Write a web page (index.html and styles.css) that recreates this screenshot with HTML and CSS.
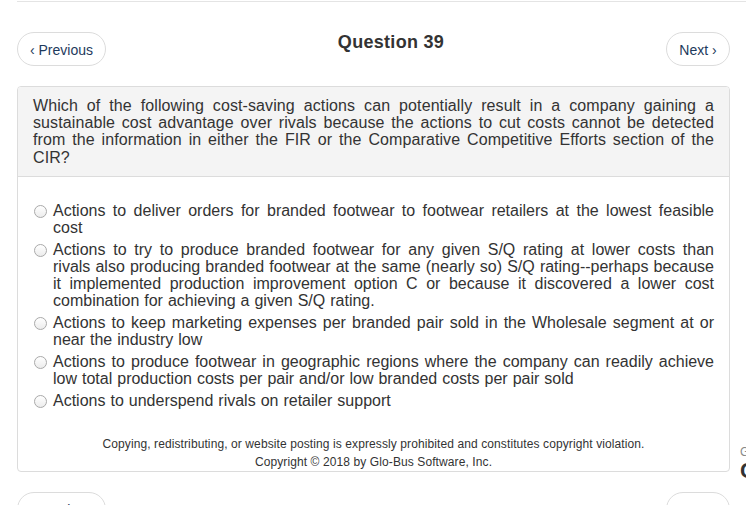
FILE: index.html
```html
<!DOCTYPE html>
<html>
<head>
<meta charset="utf-8">
<link rel="stylesheet" href="styles.css">
</head>
<body>
<div class="page">
  <div class="main">
    <div class="topline"></div>
    <div class="nav">
      <button class="btn btn-prev">&lsaquo; Previous</button>
      <h1 class="title">Question 39</h1>
      <button class="btn btn-next">Next &rsaquo;</button>
    </div>
    <div class="panel">
      <div class="panel-head">Which of the following cost-saving actions can potentially result in a company gaining a sustainable cost advantage over rivals because the actions to cut costs cannot be detected from the information in either the FIR or the Comparative Competitive Efforts section of the CIR?</div>
      <div class="panel-body">
        <ul class="options">
          <li class="option"><span class="radio"></span><span class="opt-text">Actions to deliver orders for branded footwear to footwear retailers at the lowest feasible cost</span></li>
          <li class="option"><span class="radio"></span><span class="opt-text">Actions to try to produce branded footwear for any given S/Q rating at lower costs than rivals also producing branded footwear at the same (nearly so) S/Q rating--perhaps because it implemented production improvement option C or because it discovered a lower cost combination for achieving a given S/Q rating.</span></li>
          <li class="option"><span class="radio"></span><span class="opt-text">Actions to keep marketing expenses per branded pair sold in the Wholesale segment at or near the industry low</span></li>
          <li class="option"><span class="radio"></span><span class="opt-text">Actions to produce footwear in geographic regions where the company can readily achieve low total production costs per pair and/or low branded costs per pair sold</span></li>
          <li class="option"><span class="radio"></span><span class="opt-text">Actions to underspend rivals on retailer support</span></li>
        </ul>
        <div class="copyright">
          <p>Copying, redistributing, or website posting is expressly prohibited and constitutes copyright violation.</p>
          <p>Copyright &copy; 2018 by Glo-Bus Software, Inc.</p>
        </div>
      </div>
    </div>
    <div class="nav nav-bottom">
      <button class="btn btn-prev">&lsaquo; Previous</button>
      <button class="btn btn-next">Next &rsaquo;</button>
    </div>
  </div>
  <div class="side">
    <div class="side-label">Glo-Bus</div>
    <div class="side-value">Corporate</div>
  </div>
</div>
</body>
</html>
```
FILE: styles.css
```css
html, body {
  margin: 0;
  padding: 0;
  background: #fff;
  overflow: hidden;
  width: 746px;
  height: 505px;
}
body {
  font-family: "Liberation Sans", Arial, Helvetica, sans-serif;
  color: #333;
}
.page {
  display: flex;
  padding-left: 17px;
}
.main {
  width: 713px;
  flex: none;
}
.topline {
  height: 0;
  border-top: 1px solid #e4e4e4;
  margin-top: 1px;
  margin-right: -40px;
}
.nav {
  display: flex;
  justify-content: space-between;
  align-items: flex-start;
  margin-top: 30px;
}
.btn {
  height: 34px;
  border: 1px solid #dcdcdc;
  border-radius: 17px;
  background: #fff;
  font-family: "Liberation Sans", Arial, sans-serif;
  font-size: 14px;
  color: #1e3a5c;
  padding: 2px 0 0 0;
  margin: 0;
  cursor: pointer;
}
.btn-prev { width: 89px; }
.btn-next { width: 64px; }
.title {
  margin: 0;
  font-size: 18px;
  line-height: 20px;
  letter-spacing: 0.3px;
  font-weight: bold;
  color: #333;
  padding-left: 10px;
}
.panel {
  margin-top: 20px;
  border: 1px solid #dcdcdc;
  border-radius: 4px;
  overflow: hidden;
}
.panel-head {
  background: #f4f4f4;
  border-bottom: 1px solid #dcdcdc;
  padding: 10px 15px 10px 15px;
  font-size: 16px;
  letter-spacing: 0.1px;
  line-height: 17.2px;
  text-align: justify;
}
.panel-body {
  padding: 25px 15px 0 15px;
}
.options {
  list-style: none;
  margin: 0;
  padding: 0;
}
.option {
  display: flex;
  align-items: flex-start;
  margin-bottom: 4.5px;
  font-size: 16px;
  letter-spacing: 0;
  word-spacing: 0.55px;
  line-height: 17.2px;
}
.radio {
  flex: none;
  width: 11px;
  height: 11px;
  border: 1px solid #a9a9a9;
  border-radius: 50%;
  background: linear-gradient(#ffffff, #ececec);
  margin: 3px 6px 0 1px;
}
.opt-text {
  flex: 1;
  text-align: justify;
}
.copyright {
  margin-top: 25.5px;
  text-align: center;
  font-size: 12px;
  letter-spacing: 0.1px;
  line-height: 18px;
}
.copyright p {
  margin: 0;
}
.nav-bottom {
  margin-top: 20px;
}
.side {
  margin-left: 10px;
  padding-top: 445px;
  flex: none;
  width: 120px;
}
.side-label {
  font-size: 12px;
  line-height: 14px;
  color: #888;
}
.side-value {
  font-size: 22px;
  line-height: 24px;
  font-weight: bold;
  color: #333;
}
```
